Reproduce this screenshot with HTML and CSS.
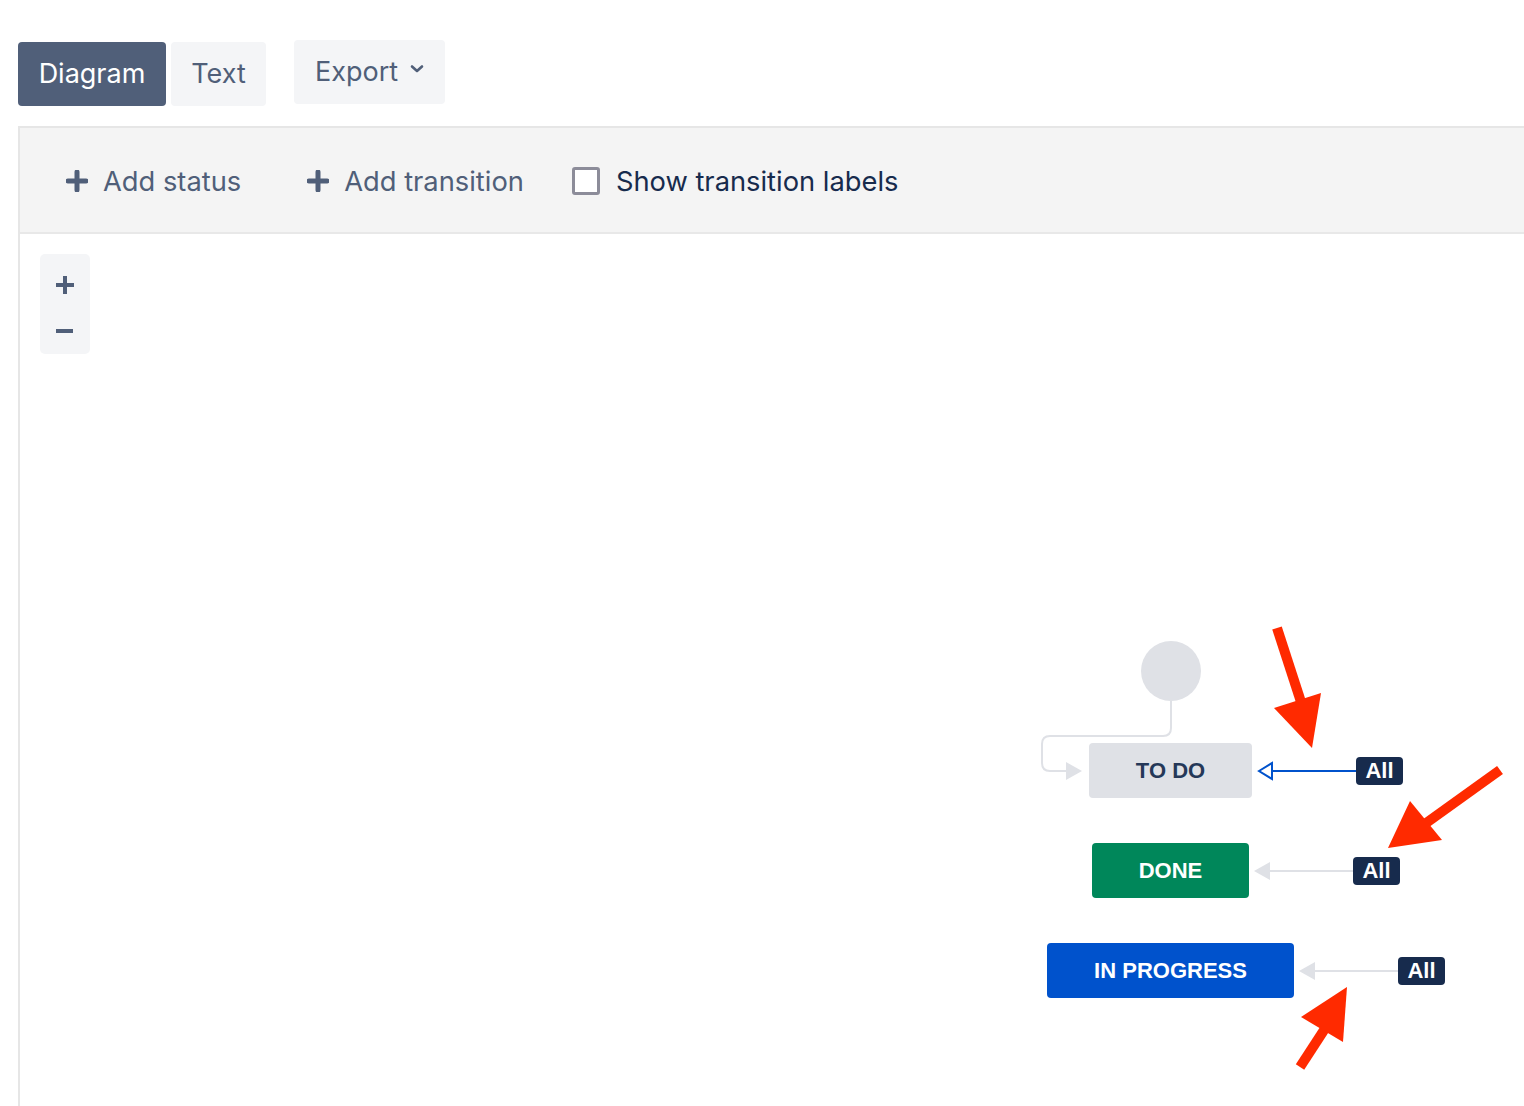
FILE: index.html
```
<!DOCTYPE html>
<html lang="en">
<head>
    <meta charset="UTF-8">
    <title>Workflow</title>
    <link rel="stylesheet" href="styles.css">
</head>
<body>
    <div class="view-tabs">
        <button class="tab active">Diagram</button>
        <button class="tab">Text</button>
        <button class="tab export">Export
            <svg class="chevron" width="14" height="10" viewBox="0 0 14 10"><path d="M2 2.5 L7 7 L12 2.5" fill="none" stroke="#505f79" stroke-width="2.6" stroke-linecap="round" stroke-linejoin="round"/></svg>
        </button>
    </div>

    <div class="workflow-panel">
        <div class="toolbar">
            <button class="tool-btn">
                <svg width="22" height="22" viewBox="0 0 22 22"><path d="M11 2 V20 M2 11 H20" stroke="#505f79" stroke-width="5" stroke-linecap="round"/></svg>
                Add status
            </button>
            <button class="tool-btn">
                <svg width="22" height="22" viewBox="0 0 22 22"><path d="M11 2 V20 M2 11 H20" stroke="#505f79" stroke-width="5" stroke-linecap="round"/></svg>
                Add transition
            </button>
            <label class="labels-toggle">
                <span class="checkbox"></span>
                Show transition labels
            </label>
        </div>

        <div class="canvas">
            <div class="zoom-control">
                <button class="zoom-btn">
                    <svg width="22" height="22" viewBox="0 0 22 22"><path d="M11 2 V20 M2 11 H20" stroke="#505f79" stroke-width="4"/></svg>
                </button>
                <button class="zoom-btn">
                    <svg width="22" height="22" viewBox="0 0 22 22"><path d="M2 11 H19" stroke="#505f79" stroke-width="4"/></svg>
                </button>
            </div>

            <!-- connectors and callouts, drawn in page coordinates -->
            <svg class="links" width="1504" height="872" viewBox="20 234 1504 872">
                <circle cx="1171" cy="671" r="30" fill="#dfe1e6"/>
                <path d="M1171 701 V728 Q1171 736 1163 736 H1050 Q1042 736 1042 744 V763 Q1042 771 1050 771 H1066" fill="none" stroke="#dfe1e6" stroke-width="2"/>
                <polygon points="1066,762 1082,771 1066,780" fill="#dfe1e6"/>

                <line x1="1272" y1="771" x2="1357" y2="771" stroke="#0052cc" stroke-width="2"/>
                <polygon points="1259,771 1272,763 1272,779" fill="#fff" stroke="#0052cc" stroke-width="2"/>

                <line x1="1268" y1="871" x2="1354" y2="871" stroke="#dfe1e6" stroke-width="2"/>
                <polygon points="1254,871 1270,862 1270,880" fill="#dfe1e6"/>

                <line x1="1313" y1="971" x2="1399" y2="971" stroke="#dfe1e6" stroke-width="2"/>
                <polygon points="1299,971 1315,962 1315,980" fill="#dfe1e6"/>

                <g fill="#ff2a00" stroke="#ff2a00">
                    <line x1="1277" y1="628" x2="1302" y2="705" stroke-width="10"/>
                    <polygon points="1274,708 1321,693 1312,748" stroke="none"/>
                    <line x1="1500" y1="770" x2="1422" y2="826" stroke-width="10"/>
                    <polygon points="1388,848 1410,801 1442,840" stroke="none"/>
                    <line x1="1300" y1="1067" x2="1328" y2="1024" stroke-width="10"/>
                    <polygon points="1347,987 1301,1017 1343,1042" stroke="none"/>
                </g>
            </svg>

            <div class="status todo">TO DO</div>
            <div class="status done">DONE</div>
            <div class="status progress">IN PROGRESS</div>

            <span class="all-badge badge-todo">All</span>
            <span class="all-badge badge-done">All</span>
            <span class="all-badge badge-progress">All</span>
        </div>
    </div>
</body>
</html>
```

FILE: styles.css
```
body {
    margin: 0;
    font-family: Inter, "Noto Sans", sans-serif;
    background-color: #fff;
    overflow: hidden;
}

button {
    font-family: inherit;
    border: none;
    cursor: pointer;
}

.view-tabs {
    display: flex;
    align-items: flex-start;
    padding: 42px 0 0 18px;
    height: 126px;
    box-sizing: border-box;
}

.tab {
    height: 64px;
    padding: 0 0 2px;
    font-size: 27px;
    color: #505f79;
    background-color: #f4f5f7;
    border-radius: 4px;
    margin-right: 5px;
    width: 95px;
}

.tab.active {
    width: 148px;
    background-color: #505f79;
    color: #fff;
}

.tab.export {
    width: 151px;
    margin: -2px 0 0 23px;
    display: flex;
    align-items: center;
    justify-content: center;
    gap: 12px;
}

.chevron {
    margin-top: -4px;
}

.workflow-panel {
    margin-left: 18px;
    border-top: 2px solid #e6e6e6;
    border-left: 2px solid #e6e6e6;
    height: 980px;
    display: flex;
    flex-direction: column;
}

.toolbar {
    height: 106px;
    flex-shrink: 0;
    background-color: #f4f4f4;
    border-bottom: 2px solid #e8e8e8;
    display: flex;
    align-items: center;
    padding: 2px 0 0 46px;
    box-sizing: border-box;
}

.tool-btn {
    display: flex;
    align-items: center;
    gap: 15px;
    background: none;
    font-size: 27.3px;
    color: #505f79;
    padding: 0;
    margin-right: 66px;
}

.tool-btn:nth-child(2) {
    margin-right: 48px;
}

.labels-toggle {
    display: flex;
    align-items: center;
    gap: 16px;
    font-size: 27.3px;
    color: #172b4d;
}

.checkbox {
    width: 22px;
    height: 22px;
    border: 3px solid #8c8c99;
    border-radius: 3px;
    background-color: #fff;
}

.canvas {
    position: relative;
    flex: 1;
}

.zoom-control {
    position: absolute;
    left: 20px;
    top: 20px;
    width: 50px;
    height: 100px;
    box-sizing: border-box;
    padding-top: 20px;
    background-color: #f4f5f7;
    border-radius: 5px;
    display: flex;
    flex-direction: column;
    align-items: center;
    gap: 24px;
}

.zoom-btn {
    background: none;
    padding: 0;
    width: 22px;
    height: 22px;
}

.links {
    position: absolute;
    left: 0;
    top: 0;
}

.status {
    position: absolute;
    height: 55px;
    display: flex;
    align-items: center;
    justify-content: center;
    border-radius: 4px;
    font-family: "Liberation Sans", Arial, sans-serif;
    font-weight: bold;
    font-size: 22px;
}

.todo {
    left: 1069px;
    top: 509px;
    width: 163px;
    background-color: #dfe1e6;
    color: #253858;
}

.done {
    left: 1072px;
    top: 609px;
    width: 157px;
    background-color: #00875a;
    color: #fff;
}

.progress {
    left: 1027px;
    top: 709px;
    width: 247px;
    background-color: #0052cc;
    color: #fff;
}

.all-badge {
    position: absolute;
    width: 47px;
    height: 28px;
    display: flex;
    align-items: center;
    justify-content: center;
    background-color: #172b4d;
    color: #fff;
    border-radius: 4px;
    font-family: "Liberation Sans", Arial, sans-serif;
    font-weight: bold;
    font-size: 22px;
}

.badge-todo {
    left: 1336px;
    top: 523px;
}

.badge-done {
    left: 1333px;
    top: 623px;
}

.badge-progress {
    left: 1378px;
    top: 723px;
}
```
